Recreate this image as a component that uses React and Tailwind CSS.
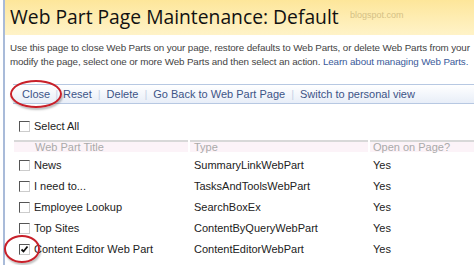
import React from "react";

const Box = ({ checked }) => (
  <span className="w-[11px] h-[11px] border border-[#555] border-r-[#ccc] border-b-[#ccc] bg-white flex items-center justify-center shrink-0">
    {checked && (
      <svg width="9" height="9" viewBox="0 0 9 9">
        <path d="M1.5 4.5 L3.5 6.5 L7.5 1.5" stroke="#111" strokeWidth="1.8" fill="none" />
      </svg>
    )}
  </span>
);

const rows = [
  ["News", "SummaryLinkWebPart"],
  ["I need to...", "TasksAndToolsWebPart"],
  ["Employee Lookup", "SearchBoxEx"],
  ["Top Sites", "ContentByQueryWebPart"],
  ["Content Editor Web Part", "ContentEditorWebPart"],
];

export default function App() {
  return (
    <div className="w-[474px] h-[265px] overflow-hidden bg-white relative flex" style={{ fontFamily: "Tahoma, 'Liberation Sans', sans-serif" }}>
      <div className="w-[3px] shrink-0" />
      <div className="w-[2px] shrink-0 bg-[#a9bbd9]" />
      <div className="flex-1 flex flex-col min-w-0">
        <div className="h-[35px] bg-gradient-to-b from-[#fde69a] to-[#fff3c8] flex items-center pl-[5px] relative">
          <span className="text-[19.3px] text-[#111] whitespace-nowrap" style={{ fontFamily: "'Open Sans', sans-serif" }}>
            Web Part Page Maintenance: Default
          </span>
          <span className="absolute left-[345px] top-[9px] text-[9px] text-[#b9a46a] opacity-60 whitespace-nowrap">
            blogspot.com
          </span>
        </div>
        <div className="pl-[5px] pt-[6px] text-[9.8px] leading-[14px] text-[#444] whitespace-nowrap tracking-[-0.12px]">
          <div>Use this page to close Web Parts on your page, restore defaults to Web Parts, or delete Web Parts from your</div>
          <div>
            modify the page, select one or more Web Parts and then select an action.{" "}
            <span className="text-[#3a5a9a]">Learn about managing Web Parts.</span>
          </div>
        </div>
        <div className="mt-[15px] ml-[8px] h-[20px] border-t border-b border-[#b7c8e2] bg-gradient-to-b from-white to-[#e8eef8] flex items-center text-[11px] text-[#3d5487] whitespace-nowrap pl-[9px]">
          <span>Close</span>
          <span className="mx-[5px] text-[#c8d3e6]">|</span>
          <span>Reset</span>
          <span className="mx-[6px] text-[#c8d3e6]">|</span>
          <span>Delete</span>
          <span className="mx-[6px] text-[#c8d3e6]">|</span>
          <span>Go Back to Web Part Page</span>
          <span className="mx-[6px] text-[#c8d3e6]">|</span>
          <span>Switch to personal view</span>
        </div>
        <div className="mt-[14px] pl-[14px] flex items-center gap-[4px] text-[11px] text-[#222]">
          <Box />
          <span>Select All</span>
        </div>
        <div className="mt-[5px] ml-[9px] grid grid-cols-[176px_180px_1fr] text-[11px] text-[#aaa]">
          <div className="border-t-2 border-[#d8d8d8] bg-[#fcf3f8] pl-[21px] h-[12px] leading-[10px] mr-[2px]">Web Part Title</div>
          <div className="border-t-2 border-[#d8d8d8] bg-[#fcf3f8] pl-[4px] h-[12px] leading-[10px] mr-[2px]">Type</div>
          <div className="border-t-2 border-[#d8d8d8] bg-[#fcf3f8] pl-[3px] h-[12px] leading-[10px]">Open on Page?</div>
        </div>
        <div className="ml-[9px] pt-[3px] flex flex-col text-[11px] text-[#222]">
          {rows.map(([t, ty], i) => (
            <div key={i} className="grid grid-cols-[176px_180px_1fr] h-[21px] items-center">
              <div className="flex items-center gap-[4px] pl-[5px]">
                <Box checked={i === 4} />
                <span>{t}</span>
              </div>
              <div className="pl-[4px]">{ty}</div>
              <div className="pl-[3px]">Yes</div>
            </div>
          ))}
        </div>
      </div>
      <div className="absolute left-[10px] top-[80px] w-[52px] h-[28px] rounded-[50%] border-2 border-[#c8202a] shadow-[1px_2px_2px_rgba(0,0,0,0.25)]" />
      <div className="absolute left-[4px] top-[235px] w-[36px] h-[28px] rounded-[50%] border-2 border-[#c8202a] shadow-[1px_2px_2px_rgba(0,0,0,0.25)]" />
    </div>
  );
}
